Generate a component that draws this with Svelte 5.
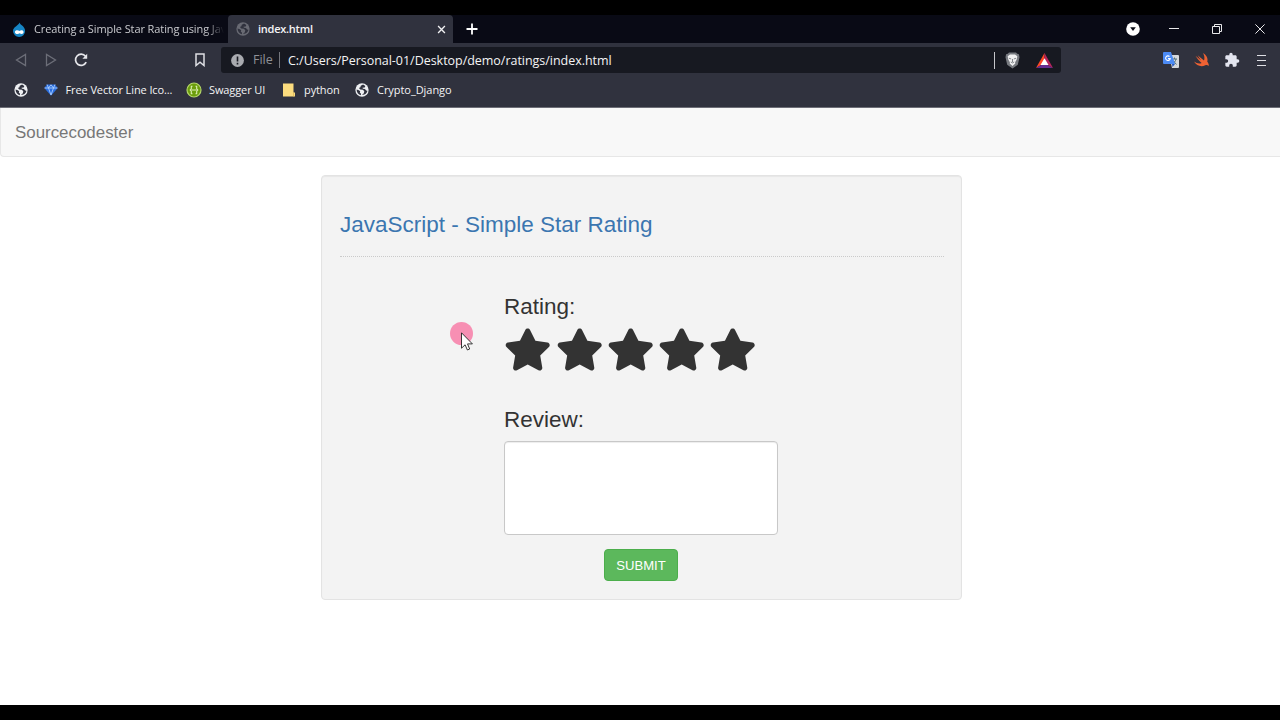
<script lang="ts">
	const url = 'C:/Users/Personal-01/Desktop/demo/ratings/index.html'
	const stars = [1, 2, 3, 4, 5]

	let rating = $state(0)
	let review = $state('')
</script>

{#snippet globe()}
	<svg class="globe" viewBox="0 0 16 16">
		<circle cx="8" cy="8" r="7.6" fill="currentColor" />
		<path d="M9.200 1.800 6.600 3.200 6.200 4.800 4.500 5.600 6 7.300l3 .3 1.600 1.700-.5 2.300-2.200 2.100 2.800-.5c1.900-.9 3.200-2.500 3.500-4.400l-1.500-.2-1.300-1.700-2.300-.2-.6-1.300 2.600-.4.7-1.500z" fill="var(--land)" />
		<path d="M1.800 7.300c0 3.300 2 5.900 5 6.700v-1.900l-1.300-.9.4-1.700-1.500-1.200z" fill="var(--land)" />
	</svg>
{/snippet}

<div class="screen">
	<header class="tabs">
		<div class="tab inactive">
			<svg class="drop" viewBox="0 0 14 16">
				<path d="M7.500.5C8 3 13.500 4.500 13.500 9.500a6.400 6.300 0 0 1-12.900.2C.6 5 6.500 4 7.500.5z" fill="#1685c5" />
				<path d="M2.600 10.300c1.200-2.200 3.500-1.800 4.900-.6 1.500-1.300 4.200-1 4.400 1 .1 2-2.500 2.700-4.200 1.200-1.500 1.400-5.200 1.200-5.100-1.600z" fill="#fff" />
			</svg>
			<span class="title">Creating a Simple Star Rating using Jav</span>
		</div>
		<div class="tab active">
			{@render globe()}
			<span class="title">index.html</span>
			<svg class="close" viewBox="0 0 10 10"><path d="M1.200 1.200 8.800 8.800M8.800 1.200 1.200 8.800" /></svg>
		</div>
		<svg class="plus" viewBox="0 0 12 12"><path d="M6 .5v11M.5 6h11" /></svg>
		<div class="window">
			<svg width="14" height="14" viewBox="0 0 14 14">
				<circle cx="7" cy="7" r="6.800" fill="#fff" />
				<path d="M4.200 5.300h5.600L7 9z" fill="#0b0c16" />
			</svg>
			<svg width="10" height="14" viewBox="0 0 10 14"><path d="M0 6.500h10" class="line" /></svg>
			<svg width="10" height="10" viewBox="0 0 10 10"><path d="M.5 2.500h7v7h-7zM2.500 2.500v-2h7v7h-2" class="line" /></svg>
			<svg width="10" height="10" viewBox="0 0 10 10"><path d="M.4.4 9.600 9.600M9.600.4.4 9.600" class="line" /></svg>
		</div>
	</header>

	<div class="toolbar">
		<div class="nav">
			<svg width="12" height="14" viewBox="0 0 12 14"><path d="M10.500 1.500v11L1.500 7z" class="arrow" /></svg>
			<svg width="12" height="14" viewBox="0 0 12 14"><path d="M1.500 1.500v11l9-5.500z" class="arrow" /></svg>
			<svg width="14" height="14" viewBox="0 0 14 14">
				<path d="M12.200 9.200A5.600 5.600 0 1 1 11.500 3.300" fill="none" stroke="#e6e7eb" stroke-width="1.700" />
				<path d="M13.200.8v5H8.400z" fill="#e6e7eb" />
			</svg>
			<svg class="mark" width="10" height="14" viewBox="0 0 10 14">
				<path d="M1 1h8v11.500L5 9.200 1 12.500z" fill="none" stroke="#dedfe4" stroke-width="1.500" />
			</svg>
		</div>
		<div class="address">
			<svg width="13" height="13" viewBox="0 0 13 13">
				<circle cx="6.500" cy="6.500" r="6.400" fill="#a9abb0" />
				<path d="M6.500 2.600v4.800M6.500 8.700v1.700" stroke="#181a22" stroke-width="1.600" />
			</svg>
			<span class="file">File</span>
			<span class="url">{url}</span>
			<svg class="shield" width="15" height="17" viewBox="0 0 15 17">
				<path d="M4 .5h7l1.200 1.300 1.700.4.6 3-1.700 7.500L7.500 16.500 2.200 12.700.5 5.200l.6-3 1.700-.4z" fill="#777a80" />
				<path d="M5 2.500h5l2.300 1.700-.6 3.300-1.600 2.800.2 1.200-2.800 2.400-2.800-2.400.2-1.200-1.600-2.800-.6-3.300z" fill="#f1f1f2" />
				<path d="M3.900 6.200 6.200 7M11.100 6.200 8.800 7M7.500 7v3M5.800 10l1.700.9 1.700-.9" fill="none" stroke="#777a80" stroke-width=".9" />
			</svg>
			<svg class="bat" width="17" height="15" viewBox="0 0 17 15">
				<path d="M8.500 0 0 15 8.500 10z" fill="#ff4724" />
				<path d="M0 15h17l-8.500-5z" fill="#662d91" />
				<path d="M8.500 0 17 15l-8.500-5z" fill="#b5245c" />
				<path d="M8.500 5.200 4.500 11.900h8z" fill="#fff" />
			</svg>
		</div>
		<div class="extensions">
			<svg width="16" height="16" viewBox="0 0 16 16">
				<path d="M6 3h9q1 0 1 1v11q0 1-1 1H9z" fill="#d5d8dc" />
				<path d="M9 7h5M11.500 5.500V7M13 7c-.5 2.500-2 4-4 5M10 8.500l3.500 4" fill="none" stroke="#53717a" stroke-width="1" />
				<path d="M1 0h7l4 12H1q-1 0-1-1V1q0-1 1-1z" fill="#4c8bf5" />
				<path d="M9 12h3l-2.500 3z" fill="#2857b8" />
				<path d="M6.500 4.500A2.300 2.300 0 1 0 7.200 6.600H5" fill="none" stroke="#fff" stroke-width="1.100" />
			</svg>
			<svg width="15" height="14" viewBox="0 0 15 14">
				<path d="M9 0c4 2.700 5.200 5.800 4.200 8.600 1.600 2 1.800 3.600 1.300 4.400-1-1.500-2.300-1.200-3.200-.7C7.300 14.300 2.500 12.800 0 8.600c2.700 1.900 5.500 2.400 7.600 1.300C5 7.800 2.900 5.200 1.500 2.800l5.400 4.400L3.600 2.200l6.400 5.300C10.900 4.800 10.300 2.300 9 0z" fill="#ef6233" />
			</svg>
			<svg width="16" height="16" viewBox="0 0 24 24">
				<path d="M20.500 11H19V7c0-1.100-.9-2-2-2h-4V3.500a2.500 2.500 0 0 0-5 0V5H4c-1.100 0-2 .9-2 2v3.800h1.500c1.500 0 2.700 1.200 2.700 2.700S5 16.200 3.500 16.200H2V20c0 1.100.9 2 2 2h3.800v-1.500c0-1.500 1.200-2.700 2.700-2.700s2.700 1.200 2.700 2.700V22H17c1.100 0 2-.9 2-2v-4h1.500a2.500 2.500 0 0 0 0-5z" fill="#e3e5ef" />
			</svg>
			<svg width="9" height="13" viewBox="0 0 9 13"><path d="M0 1.500h9M0 6.500h9M0 11.500h9" stroke="#dedfe4" stroke-width="1.200" /></svg>
		</div>
	</div>

	<nav class="bookmarks">
		{@render globe()}
		<a class="vector" href="#vector">
			<svg width="14" height="12" viewBox="0 0 14 12">
				<path d="M3 .5h8L13.700 4 7 11.700.3 4z" fill="#2a6ee0" />
				<path d="M3 .5 4.500 4 7 .8 9.500 4 11 .5M.5 4h13M4.500 4 7 11l2.500-7" fill="none" stroke="#b9d8ff" stroke-width=".8" />
			</svg>
			Free Vector Line Ico...
		</a>
		<a class="swagger" href="#swagger">
			<svg width="16" height="16" viewBox="0 0 16 16">
				<circle cx="8" cy="8" r="7" fill="#6b9d0b" stroke="#b4d66a" stroke-width="1.200" />
				<path d="M6.500 4.200H5.300v2.600L4.200 8l1.100 1.200v2.600h1.200M9.500 4.200h1.200v2.600L11.800 8l-1.100 1.200v2.600H9.500M5.500 8h5" fill="none" stroke="#dceeb4" stroke-width="1.100" />
			</svg>
			Swagger UI
		</a>
		<a class="python" href="#python">
			<svg width="12" height="14" viewBox="0 0 12 14">
				<path d="M0 .5h10.500v9H12V13.500H0z" fill="#fbdc7e" />
				<path d="M10.500 9.500V13.500" stroke="#d9b254" stroke-width=".7" />
			</svg>
			python
		</a>
		<a class="crypto" href="#crypto">
			{@render globe()}
			Crypto_Django
		</a>
	</nav>

	<main>
		<div class="navbar">Sourcecodester</div>
		<section class="well">
			<h3>JavaScript - Simple Star Rating</h3>
			<hr />
			<form onsubmit={(e) => e.preventDefault()}>
				<h3 class="label">Rating:</h3>
				<div class="stars">
					{#each stars as n}
						<button type="button" class="star" aria-label="{n} stars" onclick={() => (rating = n)}>
							<svg class:on={n <= rating} viewBox="0 0 576 512">
								<path d="M259.3 17.8L194 150.2 47.9 171.5c-26.2 3.8-36.7 36.1-17.7 54.6l105.7 103-25 145.5c-4.500 26.300 23.200 46 46.400 33.700L288 439.600l130.700 68.700c23.200 12.200 50.900-7.400 46.400-33.700l-25-145.500 105.700-103c19-18.500 8.500-50.800-17.700-54.600L382 150.200 316.700 17.800c-11.700-23.600-45.600-23.900-57.400 0z" />
							</svg>
						</button>
					{/each}
				</div>
				<h3 class="label review">Review:</h3>
				<textarea bind:value={review} aria-label="Review"></textarea>
				<button class="submit">SUBMIT</button>
			</form>
		</section>
	</main>

	<div class="pointer">
		<svg width="12" height="19" viewBox="0 0 12 19">
			<path d="M.5.8v15.400l3.600-3.400 2.300 5.200 2.300-1-2.200-5.100h4.900z" fill="#fff" stroke="#222" stroke-width=".9" />
		</svg>
	</div>
</div>

<style>
	:global(body) {
		margin: 0;
		background: #000;
	}
	svg {
		display: block;
		flex: none;
	}
	.screen {
		position: relative;
		box-sizing: border-box;
		width: 1280px;
		height: 720px;
		padding: 15px 0;
		overflow: hidden;
		display: flex;
		flex-direction: column;
		background: #000;
		font-family: 'Open Sans', 'Noto Sans', sans-serif;
		font-size: 11px;
		color: #f4f4f5;
	}
	.globe {
		width: 14px;
		height: 14px;
		color: #eef0f3;
		--land: #30323e;
	}
	.line {
		fill: none;
		stroke: #e8e8ea;
		stroke-width: 1;
	}

	.tabs {
		height: 28px;
		flex: none;
		display: flex;
		align-items: center;
		background: #090a15;
	}
		.tab {
			box-sizing: border-box;
			display: flex;
			align-items: center;
			height: 28px;
		}
		.title {
			flex: 1;
			padding-bottom: 2px;
			white-space: nowrap;
		}
		.inactive {
			width: 228px;
			padding: 0 2px 0 12px;
			color: #c9cace;
		}
			.inactive .title {
				letter-spacing: -0.1px;
				mask-image: linear-gradient(to right, #000 172px, transparent 190px);
			}
			.drop {
				width: 14px;
				height: 15px;
				margin-right: 8px;
			}
		.active {
			width: 225px;
			padding: 0 7px 0 8px;
			background: #30323e;
			border-radius: 4px 4px 0 0;
		}
			.active .globe {
				color: #686a73;
				margin-right: 8px;
			}
			.active .title {
				font-weight: 600;
				letter-spacing: -0.25px;
			}
			.close {
				width: 9px;
				height: 9px;
				stroke: #f0f0f2;
				stroke-width: 1.500;
			}
		.plus {
			width: 12px;
			height: 12px;
			margin-left: 13px;
			stroke: #fff;
			stroke-width: 1.800;
		}
		.window {
			margin-left: auto;
			padding-right: 15px;
			display: flex;
			align-items: center;
			gap: 33px;
		}
			.window svg:first-child { margin-right: -4px; }

	.toolbar {
		height: 34px;
		flex: none;
		display: flex;
		align-items: center;
		background: #30323e;
	}
		.nav {
			box-sizing: border-box;
			width: 221px;
			padding: 0 16px 0 15px;
			display: flex;
			align-items: center;
			gap: 17.500px;
		}
			.mark { margin-left: auto; }
			.arrow {
				fill: none;
				stroke: #6c6e78;
				stroke-width: 1.300;
			}
		.address {
			box-sizing: border-box;
			width: 840px;
			height: 26px;
			padding: 0 8px 0 10px;
			display: flex;
			align-items: center;
			background: #171921;
			border-radius: 3px;
			font-size: 12.500px;
		}
			.file {
				margin-left: 9px;
				width: 26px;
				line-height: 16px;
				border-right: 1px solid #74767d;
				color: #8e9096;
			}
			.url {
				flex: 1;
				margin-left: 8px;
				letter-spacing: -0.03px;
			}
			.shield {
				padding-left: 10px;
				border-left: 1px solid #c5c6ca;
			}
			.bat { margin-left: 16px; }
		.extensions {
			margin-left: auto;
			padding-right: 14px;
			display: flex;
			align-items: center;
			gap: 15px;
		}
			.extensions svg:last-child { margin-left: 2px; }

	.bookmarks {
		box-sizing: border-box;
		height: 31px;
		flex: none;
		padding: 0 0 5px 14px;
		display: flex;
		align-items: center;
		background: #30323e;
		border-bottom: 1px solid #6d6e77;
		letter-spacing: -0.1px;
	}
		.bookmarks a {
			display: flex;
			align-items: center;
			color: inherit;
			text-decoration: none;
			white-space: nowrap;
		}
		.vector {
			width: 127px;
			margin-left: 16px;
			gap: 7.500px;
		}
		.swagger {
			width: 81px;
			margin-left: 15px;
			gap: 7px;
		}
		.python {
			width: 58px;
			margin-left: 16px;
			gap: 9px;
		}
		.crypto {
			margin-left: 14px;
			gap: 8px;
			letter-spacing: -0.05px;
		}

	main {
		flex: 1;
		background: #fff;
		font-family: 'Liberation Sans', Arial, sans-serif;
		color: #333;
	}
		.navbar {
			box-sizing: border-box;
			height: 49px;
			padding-left: 14px;
			border: 1px solid #e7e7e7;
			border-top: 0;
			border-right: 0;
			border-radius: 0 0 0 4px;
			background: #f8f8f8;
			color: #777;
			font-size: 16.900px;
			line-height: 49px;
		}
	.well {
		box-sizing: border-box;
		width: 641px;
		height: 425px;
		margin: 18px 0 0 321px;
		padding: 36px 17px 0 18px;
		border: 1px solid #e3e3e3;
		border-radius: 4px;
		background: #f3f3f3;
		box-shadow: inset 0 1px 1px rgba(0, 0, 0, 0.05);
	}
		h3 {
			margin: 0;
			font-size: 22.500px;
			font-weight: 400;
			line-height: 25px;
			color: #3b76b0;
		}
		hr {
			margin: 19px 0 0;
			border: 0;
			border-top: 1px dotted #cacaca;
		}
		form {
			width: 274px;
			margin: 37px 0 0 164px;
			display: flex;
			flex-direction: column;
		}
			.label { color: #333; }
			.stars {
				display: flex;
				gap: 3.800px;
				margin: 8px 0 0 0.400px;
			}
			.star {
				padding: 0.500px 0 0;
				border: 0;
				background: none;
				cursor: pointer;
			}
				.star svg {
					width: 47.400px;
					height: 43px;
					fill: #333;
				}
				.star svg.on { fill: #f0ad4e; }
			.review { margin-top: 36.500px; }
			textarea {
				box-sizing: border-box;
				width: 274px;
				height: 94px;
				margin: 9px 0 14px;
				border: 1px solid #c8c8c8;
				border-radius: 4px;
				background: #fff;
				box-shadow: inset 0 1px 1px rgba(0, 0, 0, 0.075);
				resize: none;
			}
			.submit {
				width: 74px;
				height: 32px;
				align-self: center;
				padding: 0;
				border: 1px solid #4cae4c;
				border-radius: 4px;
				background: #5cb85c;
				color: #fff;
				font: 13.100px 'Liberation Sans', Arial, sans-serif;
			}

	.pointer {
		position: absolute;
		left: 450px;
		top: 322px;
		width: 23px;
		height: 23px;
		border-radius: 50%;
		background: #f78fb3;
	}
		.pointer svg {
			position: absolute;
			left: 11px;
			top: 10px;
		}
</style>
